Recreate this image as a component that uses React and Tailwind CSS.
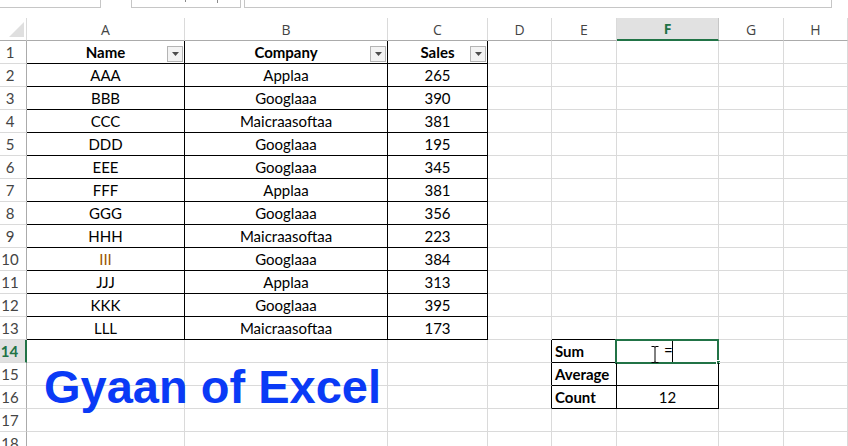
import React from "react";

const COLS = ["A", "B", "C", "D", "E", "F", "G", "H"];

const DATA = [
  ["AAA", "Applaa", "265"],
  ["BBB", "Googlaaa", "390"],
  ["CCC", "Maicraasoftaa", "381"],
  ["DDD", "Googlaaa", "195"],
  ["EEE", "Googlaaa", "345"],
  ["FFF", "Applaa", "381"],
  ["GGG", "Googlaaa", "356"],
  ["HHH", "Maicraasoftaa", "223"],
  ["III", "Googlaaa", "384"],
  ["JJJ", "Applaa", "313"],
  ["KKK", "Googlaaa", "395"],
  ["LLL", "Maicraasoftaa", "173"],
];

// is cell inside a bordered block (table A1:C13 or summary E14:F16)
function inBlock(r, c) {
  if (r >= 1 && r <= 13 && c >= 0 && c <= 2) return true;
  if (r >= 14 && r <= 16 && (c === 4 || c === 5)) return true;
  return false;
}

function FilterButton() {
  return (
    <div className="absolute right-[1px] bottom-[1px] w-[16px] h-[16px] border border-[#b4b4b4] bg-[#f3f3f3] flex items-center justify-center">
      <svg width="7" height="4" viewBox="0 0 7 4">
        <path d="M0 0 L7 0 L3.5 4 Z" fill="#4d4d4d" />
      </svg>
    </div>
  );
}

function cellText(r, c) {
  if (r === 1) return ["Name", "Company", "Sales"][c] ?? "";
  if (r >= 2 && r <= 13 && c <= 2) return DATA[r - 2][c];
  if (c === 4 && r === 14) return "Sum";
  if (c === 4 && r === 15) return "Average";
  if (c === 4 && r === 16) return "Count";
  if (c === 5 && r === 16) return "12";
  return "";
}

function Cell({ r, c }) {
  const rightBlack = inBlock(r, c) || (c === 3 && r >= 14 && r <= 16);
  const bottomBlack = inBlock(r, c) || (r === 13 && (c === 4 || c === 5));
  const text = cellText(r, c);
  const isHeader = r === 1 && c <= 2;
  const isLabel = c === 4 && r >= 14 && r <= 16;
  const selected = r === 14 && c === 5;

  return (
    <div
      className={`relative h-[23px] border-r border-b flex items-center ${
        rightBlack ? "border-r-black" : "border-r-[#dadada]"
      } ${bottomBlack ? "border-b-black" : "border-b-[#dadada]"} ${
        isLabel ? "justify-start pl-[3px] font-bold" : "justify-center"
      } ${isHeader ? "font-bold" : ""} ${r === 10 && c === 0 ? "text-[#9a5500]" : "text-black"}`}
    >
      <span className="leading-none pt-[1px]">{text}</span>
      {isHeader && <FilterButton />}
      {selected && (
        <>
          <div className="absolute -left-[2px] -top-[1px] w-[104px] h-[25px] border-2 border-[#217346]" />
          <div className="absolute -right-[3px] -bottom-[3px] w-[5px] h-[5px] bg-[#217346] border border-white" />
          <svg className="absolute left-[34px] top-[6px]" width="8" height="17" viewBox="0 0 8 17">
            <path d="M0.5 0.5 H3 Q4 0.5 4 1.5 V15.5 Q4 16.5 3 16.5 H0.5 M7.5 0.5 H5 Q4 0.5 4 1.5 M4 15.5 Q4 16.5 5 16.5 H7.5" stroke="#000" strokeWidth="1" fill="none" />
          </svg>
          <span className="absolute left-[47px] top-[3px] leading-none text-[15px]">=</span>
          <div className="absolute left-[55px] top-[1px] w-[1px] h-[21px] bg-black" />
        </>
      )}
    </div>
  );
}

export default function App() {
  const rows = Array.from({ length: 18 }, (_, i) => i + 1);

  return (
    <div className="w-[848px] h-[446px] overflow-hidden bg-white relative font-['Lato','Liberation_Sans',sans-serif] text-[15px]">
      {/* formula bar remnants */}
      <div className="h-[18px] flex items-start">
        <div className="-ml-[1px] -mt-[1px] w-[102px] h-[9px] border border-[#c6c6c6]" />
        <div className="ml-[30px] -mt-[1px] w-[110px] h-[9px] border border-[#c6c6c6] flex items-start">
          <div className="ml-[53px] w-[1px] h-[2px] bg-[#8a8a8a]" />
          <div className="ml-[31px] w-[1px] h-[3px] bg-[#8a8a8a]" />
        </div>
        <div className="ml-[3px] -mt-[1px] w-[588px] h-[9px] border border-[#c6c6c6]" />
      </div>

      <div className="grid grid-cols-[27px_158px_203px_100px_64px_65px_102px_65px_64px]">
        {/* column headers */}
        <div className="h-[23px] border-r border-b border-r-[#dadada] border-b-[#ababab] flex items-end pl-[9px] pb-[3px]">
          <svg width="15" height="15" viewBox="0 0 15 15">
            <path d="M15 0 L15 15 L0 15 Z" fill="#dfdfdf" />
          </svg>
        </div>
        {COLS.map((col) =>
          col === "F" ? (
            <div
              key={col}
              className="h-[23px] bg-[#e1e1e1] border-r border-r-[#c6c6c6] border-b-2 border-b-[#217346] flex items-center justify-center font-['Open_Sans',sans-serif] font-bold text-[14px] text-[#217346]"
            >
              {col}
            </div>
          ) : (
            <div
              key={col}
              className="h-[23px] border-r border-b border-r-[#dadada] border-b-[#ababab] flex items-center justify-center font-['Open_Sans',sans-serif] text-[14px] text-[#444444]"
            >
              {col}
            </div>
          )
        )}

        {rows.map((r) => (
          <React.Fragment key={r}>
            {r === 14 ? (
              <div className="h-[23px] bg-[#e1e1e1] border-r-2 border-r-[#217346] border-b border-b-[#dadada] flex items-center justify-center pr-[6px] font-bold text-[#217346] text-[15px]">
                {r}
              </div>
            ) : (
              <div className="h-[23px] border-r border-b border-r-[#ababab] border-b-[#dadada] flex items-center justify-center pr-[6px] text-[#444444] text-[15px]">
                {r}
              </div>
            )}
            {COLS.map((_, c) => (
              <Cell key={c} r={r} c={c} />
            ))}
          </React.Fragment>
        ))}
      </div>

      {/* text box floating over the sheet */}
      <div className="absolute left-[44px] top-[363px] leading-none font-['Liberation_Sans',Arial,sans-serif] font-bold text-[47px] text-[#0a3af6]">
        Gyaan of Excel
      </div>
    </div>
  );
}
